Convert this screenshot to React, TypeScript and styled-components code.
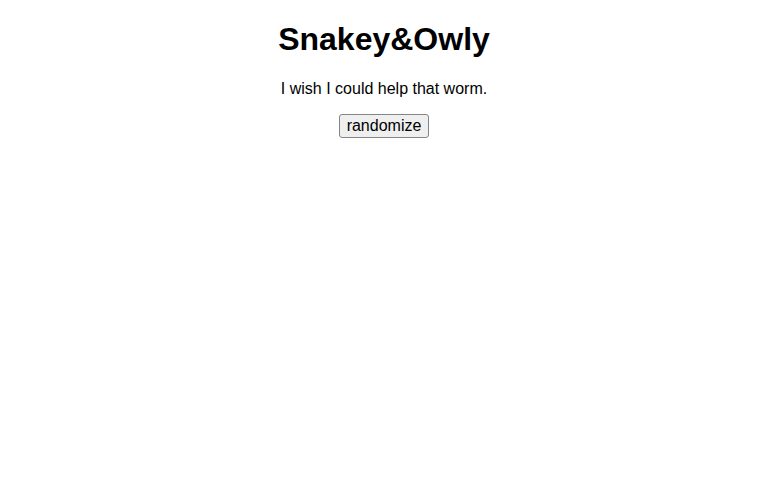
import React, { useState } from 'react';
import styled, { createGlobalStyle } from 'styled-components';

const GlobalStyle = createGlobalStyle`
    body {
        margin: 0 8px 8px;
        font-family: "Liberation Sans", Arial, sans-serif;
        background: #fff;
        color: #000;
    }
`;

const Page = styled.div`
    text-align: center;
`;

const Title = styled.h1`
    font-size: 32px;
    font-weight: bold;
    margin: 21.44px 0;
`;

const Quote = styled.p`
    font-size: 16px;
    margin: 16px 0;
`;

const RandomButton = styled.button`
    font-family: "Liberation Sans", Arial, sans-serif;
    font-size: 16px;
    line-height: 18px;
    color: #000;
    background: #efefef;
    border: 1px solid #858585;
    border-radius: 3px;
    padding: 2px 7px;
    &:hover {
        background: #e5e5e5;
    }
`;

const quotes = [
    'I wish I could help that worm.',
    'Owly, you are my best friend.',
    'Let us go fishing together.',
];

const App = (): JSX.Element => {
    const [index, setIndex] = useState(0);
    return (
        <Page>
            <GlobalStyle />
            <Title>Snakey&amp;Owly</Title>
            <Quote>{quotes[index]}</Quote>
            <RandomButton
                onClick={() => setIndex(Math.floor(Math.random() * quotes.length))}
            >
                randomize
            </RandomButton>
        </Page>
    );
};

export default App;
